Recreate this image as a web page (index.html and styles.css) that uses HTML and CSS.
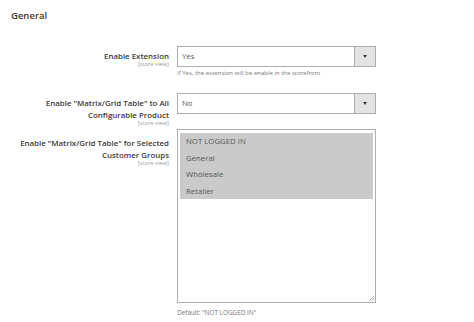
FILE: index.html
```html
<!DOCTYPE html>
<html lang="en">
<head>
    <meta charset="UTF-8">
    <title>General Settings</title>
    <link rel="stylesheet" href="styles.css">
</head>
<body>

<h2 class="section-title">General</h2>

<div class="fieldset">
    <div class="field field-first">
        <div class="label">
            <span>Enable Extension</span>
            <small>[store view]</small>
        </div>
        <div class="control">
            <div class="select">Yes<span class="arrow"></span></div>
            <p class="note">If Yes, the extension will be enable in the storefront</p>
        </div>
    </div>

    <div class="field field-second">
        <div class="label">
            <span>Enable "Matrix/Grid Table" to All Configurable Product</span>
            <small>[store view]</small>
        </div>
        <div class="control">
            <div class="select">No<span class="arrow"></span></div>
        </div>
    </div>

    <div class="field field-third">
        <div class="label">
            <span>Enable "Matrix/Grid Table" for Selected Customer Groups</span>
            <small>[store view]</small>
        </div>
        <div class="control">
            <div class="multiselect">
                <div class="option selected">NOT LOGGED IN</div>
                <div class="option selected">General</div>
                <div class="option selected">Wholesale</div>
                <div class="option selected">Retailer</div>
                <svg class="grip" width="6" height="6" viewBox="0 0 6 6">
                    <path d="M1 6 L6 1 M3.5 6 L6 3.5" stroke="#999" stroke-width="0.8"/>
                </svg>
            </div>
            <p class="note note-default">Default: "NOT LOGGED IN"</p>
        </div>
    </div>
</div>

</body>
</html>
```

FILE: styles.css
```css
body {
    margin: 0;
    background: #fff;
    font-family: "Open Sans", "Liberation Sans", sans-serif;
    font-weight: 400;
    color: #303030;
}
.section-title {
    margin: 0;
    padding: 9px 0 0 11px;
    font-size: 9.5px;
    line-height: 14px;
    font-weight: 600;
    color: #41362f;
}
.fieldset {
    padding-top: 23px;
}
.field {
    display: grid;
    grid-template-columns: 169px 199px;
    column-gap: 8px;
    align-items: start;
}
.field-first {
    margin-bottom: 15px;
}
.field-second {
    margin-bottom: 2px;
}
.label {
    text-align: right;
    font-size: 7.9px;
    line-height: 12px;
    font-weight: 600;
    color: #3a3a3a;
    padding-top: 4px;
}
.field-third .label {
    padding-top: 8px;
}
.label span {
    display: block;
    padding-left: 10px;
}
.label small {
    display: block;
    font-size: 5.8px;
    line-height: 7px;
    font-weight: 400;
    color: #999;
    margin-top: -1px;
}
.select {
    position: relative;
    height: 19px;
    border: 1px solid #adadad;
    background: #fff;
    font-size: 7.8px;
    font-weight: 400;
    line-height: 19px;
    padding-left: 4px;
    color: #555;
}
.arrow {
    position: absolute;
    top: 0;
    right: 0;
    width: 20px;
    height: 19px;
    background: #e3e3e3;
    border-left: 1px solid #adadad;
}
.arrow::after {
    content: "";
    position: absolute;
    left: 8px;
    top: 8px;
    border-left: 2.5px solid transparent;
    border-right: 2.5px solid transparent;
    border-top: 3px solid #41362f;
}
.note {
    margin: 2px 0 0;
    font-size: 6px;
    line-height: 9px;
    color: #777;
}
.multiselect {
    position: relative;
    height: 166px;
    border: 1px solid #adadad;
    padding: 3px 2px;
    background: #fff;
}
.option {
    height: 16.5px;
    line-height: 16.5px;
    padding-left: 6px;
    font-size: 7.8px;
    font-weight: 400;
    color: #555;
}
.option.selected {
    background: #cacaca;
}
.grip {
    position: absolute;
    right: 1px;
    bottom: 1px;
}
.note-default {
    margin-top: 5px;
    font-size: 6.4px;
}
```
